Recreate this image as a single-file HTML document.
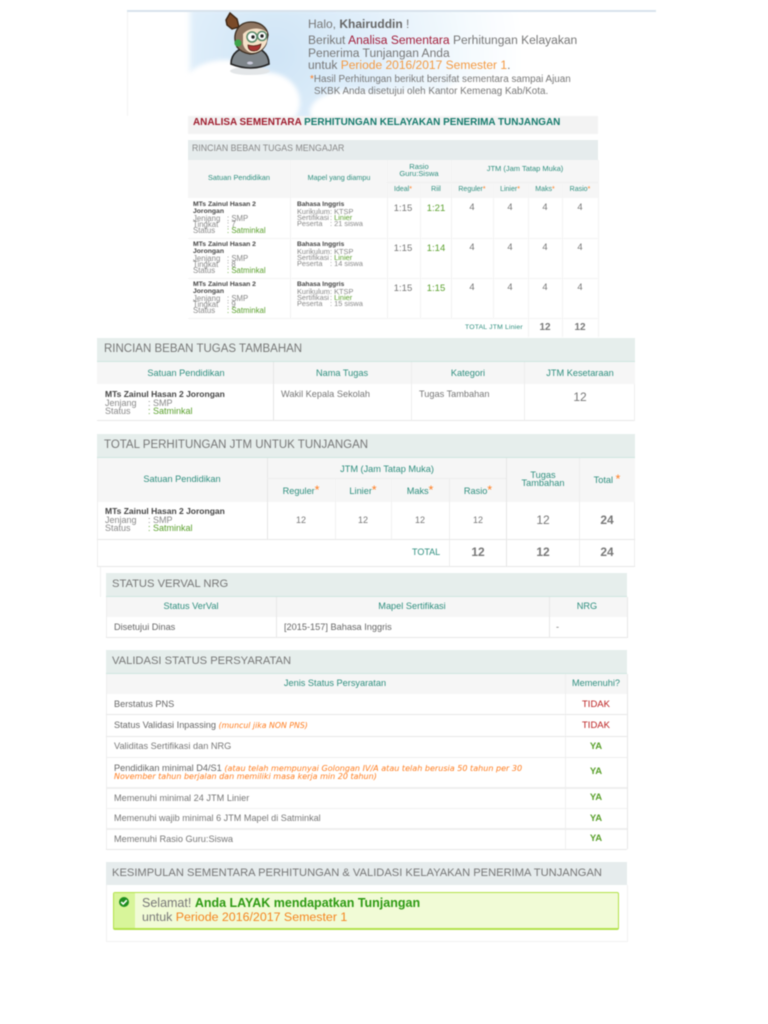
<!DOCTYPE html>
<html><head><meta charset="utf-8"><style>
html,body{margin:0;padding:0;background:#fff;width:768px;height:1024px;overflow:hidden}
#p{position:relative;width:768px;height:1024px;overflow:hidden;font-family:"Liberation Sans",sans-serif;color:#777;filter:blur(.45px)}
.b,.t,.s,svg.a{position:absolute}
.t{white-space:nowrap;line-height:1}
.c{text-align:center;transform:translateX(-50%)}
.g{color:#2f8f7f}
.d{color:#444;font-weight:bold}
.gr{color:#5aa02c}
.r{color:#b22}
.y{color:#5aa02c;font-weight:bold}
.o{color:#ff7b1c}
i.o{font-family:"DejaVu Sans",sans-serif}
.l{display:inline-block}
.m{font-size:7.8px;color:#888}
.m .l{width:34px}
.n{font-size:7.4px;color:#888}
.n .l{width:33px}
.q{font-size:9px;color:#888}
.q .l{width:43px}
.v{font-size:9.5px}
</style></head><body><div id="p">
<!-- top -->
<div class="b" style="left:127px;top:10px;width:529px;height:2px;background:#d8e3ec"></div>
<div class="b" style="left:127px;top:12px;width:1px;height:104px;background:#f4f4f4"></div>
<svg class="a" style="left:127px;top:12px" width="529" height="104" viewBox="127 12 529 104">
<defs><radialGradient id="sky" gradientUnits="userSpaceOnUse" cx="275" cy="55" r="250"><stop offset="0" stop-color="#cfe4f6"/><stop offset=".45" stop-color="#e4f1fb"/><stop offset=".8" stop-color="#f6fbfe"/><stop offset="1" stop-color="#fff"/></radialGradient>
<filter id="f1" x="-10%" y="-10%" width="120%" height="120%"><feGaussianBlur stdDeviation="3"/></filter>
<filter id="f2" x="-20%" y="-20%" width="140%" height="140%"><feGaussianBlur stdDeviation="2.5"/></filter></defs>
<rect x="190" y="8" width="340" height="112" fill="url(#sky)" filter="url(#f1)"/>
<g fill="#fff" filter="url(#f2)"><ellipse cx="225" cy="92" rx="45" ry="32"/><ellipse cx="265" cy="102" rx="35" ry="30"/><ellipse cx="190" cy="98" rx="30" ry="26"/><ellipse cx="352" cy="112" rx="42" ry="22"/><ellipse cx="410" cy="108" rx="70" ry="18"/><ellipse cx="500" cy="100" rx="60" ry="25"/></g>
</svg>
<svg class="a" style="left:210px;top:5px" width="80" height="75" viewBox="0 0 80 75">
<ellipse cx="40" cy="66" rx="20" ry="4" fill="#e3e6e8"/>
<path d="M21 59C21 48 30 42 40 42s19 6 19 17q-18 8-38 0z" fill="#7d8489" stroke="#222" stroke-width="1.6"/>
<path d="M16 15l4-7 7 6 2 8-7 2-5-4z" fill="#7a4a28" stroke="#3a2412" stroke-width="1.4"/>
<path d="M27 42C21 28 29 17 41 17c9 0 16 5 17 13l-2 9c-3 7-10 10-16 10-6-1-10-3-13-7z" fill="#8d7460" stroke="#3a2d20" stroke-width="1.3"/>
<path d="M33 29c6-7 17-7 24-2l0 9c-2 8-9 12-15 12-5-1-8-5-9-9z" fill="#f6e1c8"/>
<circle cx="42" cy="32" r="5" fill="#fff" stroke="#5a8a6a" stroke-width="1.5"/><circle cx="52" cy="31" r="4.5" fill="#fff" stroke="#5a8a6a" stroke-width="1.5"/>
<circle cx="43" cy="32" r="1.7" fill="#222"/><circle cx="52" cy="31" r="1.7" fill="#222"/>
<path d="M38 40q7 2 13-1q-1 7-7 7t-6-6z" fill="#a33" stroke="#421" stroke-width=".7"/>
<circle cx="28" cy="38" r="3.6" fill="#3fa34a"/>
<ellipse cx="40" cy="58" rx="3" ry="1.5" fill="#ccd"/>
</svg>
<div class="t" style="left:308px;top:18px;font-size:12px">Halo, <b style="color:#666">Khairuddin</b> !</div>
<div class="t" style="left:308px;top:34px;font-size:12.03px">Berikut <span style="color:#a3203c">Analisa Sementara</span> Perhitungan Kelayakan</div>
<div class="t" style="left:308px;top:47px;font-size:12.03px">Penerima Tunjangan Anda</div>
<div class="t" style="left:308px;top:59px;font-size:12.03px">untuk <span style="color:#f49a42">Periode 2016/2017 Semester 1</span>.</div>
<div class="t" style="left:310px;top:75px;font-size:9.9px"><span class="o">*</span>Hasil Perhitungan berikut bersifat sementara sampai Ajuan</div>
<div class="t" style="left:314px;top:87px;font-size:9.85px">SKBK Anda disetujui oleh Kantor Kemenag Kab/Kota.</div>
<!-- s1 -->
<div class="b" style="left:188px;top:116px;width:410px;height:18px;background:#f3f3f3"></div>
<div class="t" style="left:193px;top:118px;font-size:9.95px;font-weight:bold;color:#157a6c"><span style="color:#9e1b2c">ANALISA SEMENTARA</span> PERHITUNGAN KELAYAKAN PENERIMA TUNJANGAN</div>
<div class="b" style="left:188px;top:140px;width:410px;height:20px;background:#e6eced"></div>
<div class="t" style="left:192px;top:144px;font-size:8.8px;color:#888">RINCIAN BEBAN TUGAS MENGAJAR</div>
<div class="b" style="left:188px;top:160px;width:410px;height:38px;background:#f6f6f6"></div>
<div class="b" style="left:290px;top:160px;width:1px;height:158px;background:#f2f2f2"></div>
<div class="b" style="left:387px;top:160px;width:1px;height:158px;background:#f2f2f2"></div>
<div class="b" style="left:451px;top:160px;width:1px;height:158px;background:#f2f2f2"></div>
<div class="b" style="left:420px;top:182px;width:1px;height:136px;background:#f4f4f4"></div>
<div class="b" style="left:493px;top:182px;width:1px;height:136px;background:#f4f4f4"></div>
<div class="b" style="left:528px;top:182px;width:1px;height:155px;background:#f4f4f4"></div>
<div class="b" style="left:562px;top:182px;width:1px;height:155px;background:#f4f4f4"></div>
<div class="b" style="left:598px;top:160px;width:1px;height:177px;background:#f4f4f4"></div>
<div class="b" style="left:387px;top:182px;width:211px;height:1px;background:#f0f0f0"></div>
<div class="b" style="left:188px;top:238px;width:410px;height:1px;background:#f4f4f4"></div>
<div class="b" style="left:188px;top:278px;width:410px;height:1px;background:#f4f4f4"></div>
<div class="b" style="left:188px;top:318px;width:410px;height:1px;background:#f4f4f4"></div>
<div class="t c g" style="left:239px;top:174px;font-size:7.4px">Satuan Pendidikan</div>
<div class="t c g" style="left:339px;top:174px;font-size:7.2px">Mapel yang diampu</div>
<div class="t c g" style="left:419px;top:163px;font-size:7.6px">Rasio</div>
<div class="t c g" style="left:419px;top:170px;font-size:7.6px">Guru:Siswa</div>
<div class="t c g" style="left:525px;top:165px;font-size:7.5px">JTM (Jam Tatap Muka)</div>
<div class="t c g" style="left:403px;top:186px;font-size:7px">Ideal<span class="o">*</span></div>
<div class="t c g" style="left:436px;top:186px;font-size:7px">Riil</div>
<div class="t c g" style="left:472px;top:186px;font-size:7px">Reguler<span class="o">*</span></div>
<div class="t c g" style="left:510px;top:186px;font-size:7px">Linier<span class="o">*</span></div>
<div class="t c g" style="left:545px;top:186px;font-size:7px">Maks<span class="o">*</span></div>
<div class="t c g" style="left:580px;top:186px;font-size:7px">Rasio<span class="o">*</span></div>
<!-- s1 rows -->
<div class="t d" style="left:193px;top:202px;font-size:6.8px;line-height:6.6px;white-space:normal;width:68px">MTs Zainul Hasan 2 Jorongan</div>
<div class="t m" style="left:193px;top:215px"><span class="l">Jenjang</span>: SMP</div>
<div class="t m" style="left:193px;top:221px"><span class="l">Tingkat</span>: 7</div>
<div class="t m" style="left:193px;top:227px"><span class="l">Status</span><span class="gr">: Satminkal</span></div>
<div class="t d" style="left:297px;top:202px;font-size:6.6px">Bahasa Inggris</div>
<div class="t n" style="left:297px;top:208px"><span class="l">Kurikulum</span>: KTSP</div>
<div class="t n" style="left:297px;top:214px"><span class="l">Sertifikasi</span>: <span class="gr">Linier</span></div>
<div class="t n" style="left:297px;top:220px"><span class="l">Peserta</span>: 21 siswa</div>
<div class="t c v" style="left:403px;top:204px">1:15</div><div class="t c gr v" style="left:436px;top:204px">1:21</div>
<div class="t c v" style="left:472px;top:203px">4</div><div class="t c v" style="left:510px;top:203px">4</div><div class="t c v" style="left:545px;top:203px">4</div><div class="t c v" style="left:580px;top:203px">4</div>

<div class="t d" style="left:193px;top:242px;font-size:6.8px;line-height:6.6px;white-space:normal;width:68px">MTs Zainul Hasan 2 Jorongan</div>
<div class="t m" style="left:193px;top:255px"><span class="l">Jenjang</span>: SMP</div>
<div class="t m" style="left:193px;top:261px"><span class="l">Tingkat</span>: 8</div>
<div class="t m" style="left:193px;top:267px"><span class="l">Status</span><span class="gr">: Satminkal</span></div>
<div class="t d" style="left:297px;top:242px;font-size:6.6px">Bahasa Inggris</div>
<div class="t n" style="left:297px;top:248px"><span class="l">Kurikulum</span>: KTSP</div>
<div class="t n" style="left:297px;top:254px"><span class="l">Sertifikasi</span>: <span class="gr">Linier</span></div>
<div class="t n" style="left:297px;top:260px"><span class="l">Peserta</span>: 14 siswa</div>
<div class="t c v" style="left:403px;top:244px">1:15</div><div class="t c gr v" style="left:436px;top:244px">1:14</div>
<div class="t c v" style="left:472px;top:243px">4</div><div class="t c v" style="left:510px;top:243px">4</div><div class="t c v" style="left:545px;top:243px">4</div><div class="t c v" style="left:580px;top:243px">4</div>

<div class="t d" style="left:193px;top:282px;font-size:6.8px;line-height:6.6px;white-space:normal;width:68px">MTs Zainul Hasan 2 Jorongan</div>
<div class="t m" style="left:193px;top:295px"><span class="l">Jenjang</span>: SMP</div>
<div class="t m" style="left:193px;top:301px"><span class="l">Tingkat</span>: 9</div>
<div class="t m" style="left:193px;top:307px"><span class="l">Status</span><span class="gr">: Satminkal</span></div>
<div class="t d" style="left:297px;top:282px;font-size:6.6px">Bahasa Inggris</div>
<div class="t n" style="left:297px;top:288px"><span class="l">Kurikulum</span>: KTSP</div>
<div class="t n" style="left:297px;top:294px"><span class="l">Sertifikasi</span>: <span class="gr">Linier</span></div>
<div class="t n" style="left:297px;top:300px"><span class="l">Peserta</span>: 15 siswa</div>
<div class="t c v" style="left:403px;top:284px">1:15</div><div class="t c gr v" style="left:436px;top:284px">1:15</div>
<div class="t c v" style="left:472px;top:283px">4</div><div class="t c v" style="left:510px;top:283px">4</div><div class="t c v" style="left:545px;top:283px">4</div><div class="t c v" style="left:580px;top:283px">4</div>

<div class="t g" style="left:465px;top:325px;font-size:6.8px;letter-spacing:.2px">TOTAL JTM Linier</div>
<div class="t c" style="left:545px;top:323px;font-size:10px;font-weight:bold">12</div>
<div class="t c" style="left:580px;top:323px;font-size:10px;font-weight:bold">12</div>

<!-- s2 -->
<div class="b" style="left:97px;top:338px;width:538px;height:24px;background:#e6eeec;border-bottom:1px solid #cfe6e0;box-sizing:border-box"></div>
<div class="t" style="left:104px;top:344px;font-size:11.5px;color:#777">RINCIAN BEBAN TUGAS TAMBAHAN</div>
<div class="b" style="left:97px;top:362px;width:538px;height:22px;background:#f6f6f6"></div>
<div class="b" style="left:97px;top:420px;width:538px;height:1px;background:#e8e8e8"></div>
<div class="b" style="left:273px;top:362px;width:1px;height:58px;background:#e6e6e6"></div>
<div class="b" style="left:411px;top:362px;width:1px;height:58px;background:#eee"></div>
<div class="b" style="left:524px;top:362px;width:1px;height:58px;background:#eee"></div>
<div class="b" style="left:634px;top:384px;width:1px;height:37px;background:#eee"></div>
<div class="t c g" style="left:186px;top:369px;font-size:9.2px">Satuan Pendidikan</div>
<div class="t c g" style="left:342px;top:369px;font-size:9.2px">Nama Tugas</div>
<div class="t c g" style="left:468px;top:369px;font-size:9.2px">Kategori</div>
<div class="t c g" style="left:580px;top:369px;font-size:9.2px">JTM Kesetaraan</div>
<div class="t d" style="left:105px;top:390px;font-size:8.5px">MTs Zainul Hasan 2 Jorongan</div>
<div class="t q" style="left:105px;top:399px"><span class="l">Jenjang</span>: SMP</div>
<div class="t q" style="left:105px;top:407px"><span class="l">Status</span><span class="gr">: Satminkal</span></div>
<div class="t" style="left:281px;top:390px;font-size:9.2px">Wakil Kepala Sekolah</div>
<div class="t" style="left:419px;top:390px;font-size:9.2px">Tugas Tambahan</div>
<div class="t c" style="left:580px;top:391px;font-size:12px">12</div>

<!-- s3 -->
<div class="b" style="left:97px;top:434px;width:538px;height:24px;background:#e6eeec;border-bottom:1px solid #cfe6e0;box-sizing:border-box"></div>
<div class="t" style="left:104px;top:440px;font-size:11.5px">TOTAL PERHITUNGAN JTM UNTUK TUNJANGAN</div>
<div class="b" style="left:97px;top:458px;width:538px;height:44px;background:#f6f6f6"></div>
<div class="b" style="left:97px;top:458px;width:1px;height:108px;background:#eee"></div>
<div class="b" style="left:267px;top:458px;width:1px;height:81px;background:#e6e6e6"></div>
<div class="b" style="left:335px;top:478px;width:1px;height:61px;background:#f2f2f2"></div>
<div class="b" style="left:391px;top:478px;width:1px;height:61px;background:#f2f2f2"></div>
<div class="b" style="left:449px;top:478px;width:1px;height:88px;background:#eee"></div>
<div class="b" style="left:506px;top:458px;width:1px;height:108px;background:#e6e6e6"></div>
<div class="b" style="left:579px;top:458px;width:1px;height:108px;background:#eee"></div>
<div class="b" style="left:634px;top:502px;width:1px;height:64px;background:#eee"></div>
<div class="b" style="left:267px;top:478px;width:239px;height:1px;background:#eee"></div>
<div class="b" style="left:97px;top:539px;width:538px;height:1px;background:#e8e8e8"></div>
<div class="b" style="left:97px;top:566px;width:538px;height:1px;background:#e8e8e8"></div>
<div class="t c g" style="left:182px;top:475px;font-size:9.2px">Satuan Pendidikan</div>
<div class="t c g" style="left:387px;top:465px;font-size:9.2px">JTM (Jam Tatap Muka)</div>
<div class="t c g" style="left:543px;top:471px;font-size:9.2px">Tugas</div>
<div class="t c g" style="left:543px;top:479px;font-size:9.2px">Tambahan</div>
<div class="t c g" style="left:607px;top:475px;font-size:9.2px">Total <span class="o" style="font-size:12px;line-height:8px">*</span></div>
<div class="t c g" style="left:301px;top:486px;font-size:9.2px">Reguler<span class="o" style="font-size:12px;line-height:8px">*</span></div>
<div class="t c g" style="left:363px;top:486px;font-size:9.2px">Linier<span class="o" style="font-size:12px;line-height:8px">*</span></div>
<div class="t c g" style="left:420px;top:486px;font-size:9.2px">Maks<span class="o" style="font-size:12px;line-height:8px">*</span></div>
<div class="t c g" style="left:478px;top:486px;font-size:9.2px">Rasio<span class="o" style="font-size:12px;line-height:8px">*</span></div>
<div class="t d" style="left:105px;top:507px;font-size:8.5px">MTs Zainul Hasan 2 Jorongan</div>
<div class="t q" style="left:105px;top:516px"><span class="l">Jenjang</span>: SMP</div>
<div class="t q" style="left:105px;top:524px"><span class="l">Status</span><span class="gr">: Satminkal</span></div>
<div class="t c" style="left:301px;top:516px;font-size:9px">12</div>
<div class="t c" style="left:363px;top:516px;font-size:9px">12</div>
<div class="t c" style="left:420px;top:516px;font-size:9px">12</div>
<div class="t c" style="left:478px;top:516px;font-size:9px">12</div>
<div class="t c" style="left:543px;top:514px;font-size:12px">12</div>
<div class="t c" style="left:607px;top:514px;font-size:12px;font-weight:bold">24</div>
<div class="t g" style="left:412px;top:548px;font-size:9px">TOTAL</div>
<div class="t c" style="left:478px;top:546px;font-size:12px;font-weight:bold">12</div>
<div class="t c" style="left:543px;top:546px;font-size:12px;font-weight:bold">12</div>
<div class="t c" style="left:607px;top:546px;font-size:12px;font-weight:bold">24</div>

<!-- s4 -->
<div class="b" style="left:100px;top:567px;width:1px;height:30px;background:#f2f2f2"></div>
<div class="b" style="left:106px;top:573px;width:521px;height:24px;background:#e6eeec;border-bottom:1px solid #cfe6e0;box-sizing:border-box"></div>
<div class="t" style="left:112px;top:579px;font-size:11.2px">STATUS VERVAL NRG</div>
<div class="b" style="left:106px;top:597px;width:521px;height:20px;background:#f6f6f6"></div>
<div class="b" style="left:106px;top:637px;width:521px;height:1px;background:#e8e8e8"></div>
<div class="b" style="left:106px;top:597px;width:1px;height:40px;background:#eee"></div>
<div class="b" style="left:276px;top:597px;width:1px;height:40px;background:#e8e8e8"></div>
<div class="b" style="left:549px;top:597px;width:1px;height:40px;background:#e8e8e8"></div>
<div class="b" style="left:627px;top:597px;width:1px;height:41px;background:#e8e8e8"></div>
<div class="t c g" style="left:191px;top:602px;font-size:9.2px">Status VerVal</div>
<div class="t c g" style="left:412px;top:602px;font-size:9.2px">Mapel Sertifikasi</div>
<div class="t c g" style="left:587px;top:602px;font-size:9.2px">NRG</div>
<div class="t" style="left:114px;top:623px;font-size:9.2px;color:#666">Disetujui Dinas</div>
<div class="t" style="left:284px;top:623px;font-size:9.2px;color:#666">[2015-157] Bahasa Inggris</div>
<div class="t" style="left:556px;top:623px;font-size:9.2px">-</div>

<!-- s5 -->
<div class="b" style="left:106px;top:650px;width:521px;height:24px;background:#e6eeec;border-bottom:1px solid #cfe6e0;box-sizing:border-box"></div>
<div class="t" style="left:112px;top:656px;font-size:11.2px">VALIDASI STATUS PERSYARATAN</div>
<div class="b" style="left:106px;top:674px;width:521px;height:20px;background:#f6f6f6"></div>
<div class="b" style="left:106px;top:674px;width:1px;height:175px;background:#eee"></div>
<div class="b" style="left:565px;top:674px;width:1px;height:175px;background:#f0f0f0"></div>
<div class="b" style="left:627px;top:674px;width:1px;height:175px;background:#e8e8e8"></div>
<div class="b" style="left:106px;top:714px;width:521px;height:1px;background:#e8e8e8"></div>
<div class="b" style="left:106px;top:736px;width:521px;height:1px;background:#e8e8e8"></div>
<div class="b" style="left:106px;top:757px;width:521px;height:1px;background:#eee"></div>
<div class="b" style="left:106px;top:787px;width:521px;height:2px;background:#eee"></div>
<div class="b" style="left:106px;top:808px;width:521px;height:1px;background:#f2f2f2"></div>
<div class="b" style="left:106px;top:828px;width:521px;height:2px;background:#eee"></div>
<div class="b" style="left:106px;top:849px;width:521px;height:1px;background:#e8e8e8"></div>
<div class="t c g" style="left:335px;top:679px;font-size:9.2px">Jenis Status Persyaratan</div>
<div class="t c g" style="left:596px;top:679px;font-size:9.2px">Memenuhi?</div>
<div class="t" style="left:114px;top:700px;font-size:9.2px;color:#666">Berstatus PNS</div>
<div class="t" style="left:114px;top:721px;font-size:9.2px;color:#666">Status Validasi Inpassing <i class="o" style="font-size:7.8px">(muncul jika NON PNS)</i></div>
<div class="t" style="left:114px;top:742px;font-size:9.2px">Validitas Sertifikasi dan NRG</div>
<div class="t" style="left:114px;top:764px;font-size:9.2px;color:#666">Pendidikan minimal D4/S1 <i class="o" style="font-size:8.05px">(atau telah mempunyai Golongan IV/A atau telah berusia 50 tahun per 30</i></div>
<div class="t o" style="left:114px;top:773px;font-size:8px;font-style:italic;font-family:'DejaVu Sans',sans-serif">November tahun berjalan dan memiliki masa kerja min 20 tahun)</div>
<div class="t" style="left:114px;top:794px;font-size:9.2px">Memenuhi minimal 24 JTM Linier</div>
<div class="t" style="left:114px;top:814px;font-size:9.1px">Memenuhi wajib minimal 6 JTM Mapel di Satminkal</div>
<div class="t" style="left:114px;top:835px;font-size:9.2px">Memenuhi Rasio Guru:Siswa</div>
<div class="t c r" style="left:596px;top:700px;font-size:9.5px">TIDAK</div>
<div class="t c r" style="left:596px;top:721px;font-size:9.5px">TIDAK</div>
<div class="t c y" style="left:596px;top:742px;font-size:9.5px">YA</div>
<div class="t c y" style="left:596px;top:767px;font-size:9.5px">YA</div>
<div class="t c y" style="left:596px;top:793px;font-size:9.5px">YA</div>
<div class="t c y" style="left:596px;top:814px;font-size:9.5px">YA</div>
<div class="t c y" style="left:596px;top:834px;font-size:9.5px">YA</div>

<!-- s6 -->
<div class="b" style="left:106px;top:862px;width:521px;height:23px;background:#e6eced"></div>
<div class="t" style="left:112px;top:868px;font-size:11.17px">KESIMPULAN SEMENTARA PERHITUNGAN &amp; VALIDASI KELAYAKAN PENERIMA TUNJANGAN</div>
<div class="b" style="left:106px;top:885px;width:1px;height:57px;background:#f2f2f2"></div>
<div class="b" style="left:627px;top:885px;width:1px;height:57px;background:#f2f2f2"></div>
<div class="b" style="left:106px;top:941px;width:522px;height:1px;background:#f2f2f2"></div>
<div class="b" style="left:113px;top:892px;width:506px;height:38px;box-sizing:border-box;background:#f1fbd6;border:1px solid #b3e24a;border-bottom-width:2px;border-radius:2px"></div>
<div class="b" style="left:114px;top:893px;width:21px;height:35px;background:#d8f59a"></div>
<svg class="a" style="left:118px;top:896px" width="12" height="12" viewBox="0 0 12 12"><circle cx="6" cy="6" r="5" fill="#1f8f1f"/><path d="M3.2 6l2 2 3.6-3.8" fill="none" stroke="#fff" stroke-width="1.6"/></svg>
<div class="t" style="left:142px;top:897px;font-size:12.5px">Selamat! <b style="color:#2d9a12">Anda LAYAK mendapatkan Tunjangan</b></div>
<div class="t" style="left:142px;top:911px;font-size:12.4px">untuk <span style="color:#f5841f">Periode 2016/2017 Semester 1</span></div>
</div></body></html>
